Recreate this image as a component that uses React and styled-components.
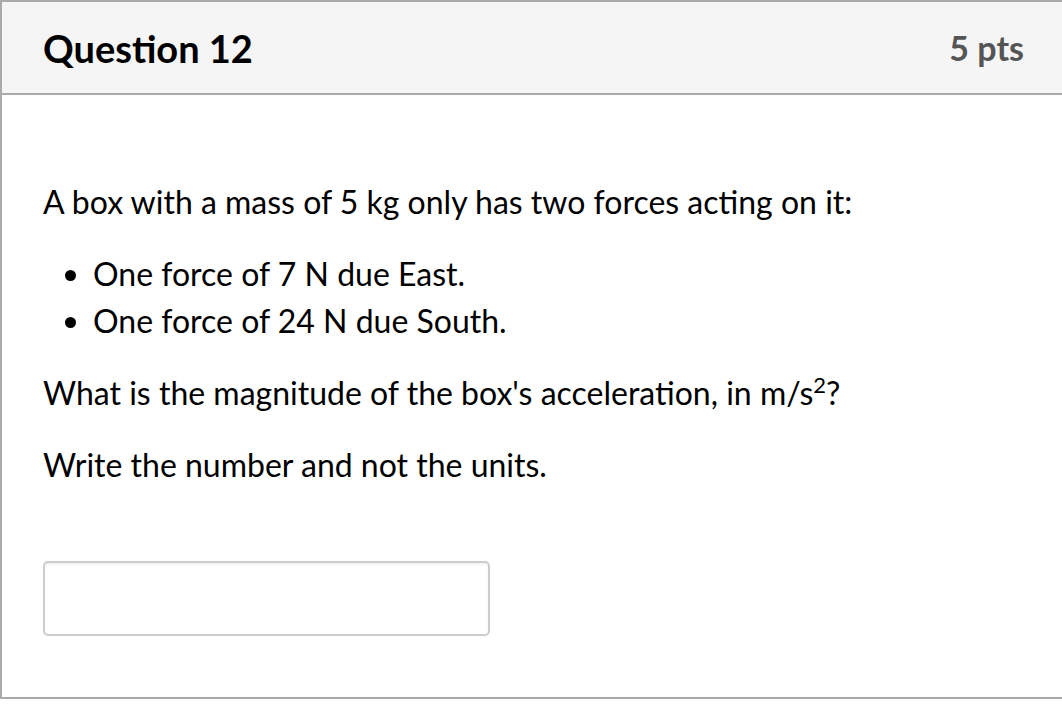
import React from 'react';
import styled, { createGlobalStyle } from 'styled-components';

const GlobalStyle = createGlobalStyle`
  html, body {
    margin: 0;
    padding: 0;
    background: #ffffff;
    overflow: hidden;
  }
  body {
    font-family: Lato, "Open Sans", "Liberation Sans", sans-serif;
    color: #000000;
  }
`;

const Card = styled.div`
  width: 1062px;
  box-sizing: border-box;
  border: 2px solid #aaaaaa;
  border-right: none;
  background: #ffffff;
`;

const Header = styled.div`
  height: 91px;
  display: flex;
  align-items: center;
  justify-content: space-between;
  padding: 0 38px 0 41px;
  box-sizing: content-box;
  background: #f5f5f5;
  border-bottom: 2px solid #aaaaaa;
`;

const Title = styled.h2`
  margin: 0;
  font-size: 38px;
  font-weight: 700;
  color: #000000;
`;

const Points = styled.span`
  font-size: 34px;
  font-weight: 700;
  color: #555555;
`;

const Body = styled.div`
  padding: 83px 41px 61px 41px;
`;

const Text = styled.p`
  margin: 0 0 25px 0;
  font-size: 32px;
  line-height: 47px;
`;

const List = styled.ul`
  margin: 0 0 25px 0;
  padding-left: 50px;
  font-size: 32px;
  line-height: 47px;
`;

const Sup = styled.sup`
  font-size: 22px;
  line-height: 0;
`;

const Answer = styled.input`
  display: block;
  margin-top: 73px;
  width: 447px;
  height: 75px;
  box-sizing: border-box;
  border: 2px solid #cccccc;
  border-radius: 5px;
  box-shadow: inset 0 2px 2px rgba(0, 0, 0, 0.05);
  outline: none;
  font-size: 26px;
  font-family: inherit;
  padding: 0 12px;
`;

export default function App() {
  return (
    <>
      <GlobalStyle />
      <Card>
        <Header>
          <Title>Question 12</Title>
          <Points>5 pts</Points>
        </Header>
        <Body>
          <Text>A box with a mass of 5 kg only has two forces acting on it:</Text>
          <List>
            <li>One force of 7 N due East.</li>
            <li>One force of 24 N due South.</li>
          </List>
          <Text>
            What is the magnitude of the box's acceleration, in m/s<Sup>2</Sup>?
          </Text>
          <Text style={{ marginBottom: 0 }}>Write the number and not the units.</Text>
          <Answer type="text" />
        </Body>
      </Card>
    </>
  );
}
